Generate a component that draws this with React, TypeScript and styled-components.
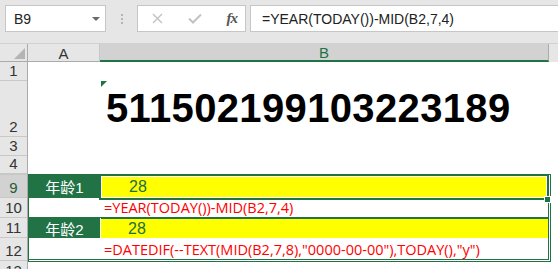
import React from "react";
import styled, { createGlobalStyle } from "styled-components";

const GREEN = "#217346";

const GlobalStyle = createGlobalStyle`
  html, body {
    margin: 0;
    padding: 0;
    background: #fff;
    overflow: hidden;
  }
  body {
    font-family: "Liberation Sans", "Noto Sans CJK SC", sans-serif;
  }
`;

const Window = styled.div`
  width: 558px;
  height: 269px;
  overflow: hidden;
  display: flex;
  flex-direction: column;
  background: #fff;
`;

/* ---------- formula bar ---------- */

const FormulaBar = styled.div`
  height: 43px;
  flex-shrink: 0;
  box-sizing: border-box;
  display: flex;
  align-items: flex-start;
  padding: 5px 0 0 5px;
  background: #e6e6e6;
`;

const Box = styled.div`
  height: 27px;
  box-sizing: border-box;
  background: #fff;
  border: 1px solid #c6c6c6;
  display: flex;
  align-items: center;
`;

const NameBox = styled(Box)`
  width: 101px;
  padding: 0 5px 0 8px;
  justify-content: space-between;
  font-size: 14px;
  color: #222;
`;

const DropArrow = styled.span`
  width: 0;
  height: 0;
  border-left: 4px solid transparent;
  border-right: 4px solid transparent;
  border-top: 4px solid #6a6a6a;
`;

const Dots = styled.div`
  margin: 9px 0 0 15px;
  display: flex;
  flex-direction: column;
  gap: 2px;
  span {
    width: 2px;
    height: 2px;
    background: #b5b5b5;
  }
`;

const FxBox = styled(Box)`
  width: 109px;
  margin-left: 14px;
  padding: 0 8px 0 14px;
  justify-content: space-between;
`;

const FxLabel = styled.span`
  font-family: "Liberation Serif", serif;
  font-style: italic;
  font-weight: bold;
  font-size: 15px;
  color: #555;
  letter-spacing: -1px;
`;

const FormulaInput = styled(Box)`
  flex: 1;
  margin-left: 4px;
  border-right: none;
  padding-left: 11px;
  font-size: 14px;
  color: #222;
`;

/* ---------- column headers ---------- */

const HeaderRow = styled.div`
  height: 19px;
  flex-shrink: 0;
  display: flex;
  box-sizing: border-box;
  border-top: 1px solid #d0d0d0;
  background: #e6e6e6;
`;

const Corner = styled.div`
  width: 28px;
  box-sizing: border-box;
  border-right: 1px solid #ababab;
  border-bottom: 1px solid #ababab;
  position: relative;
  &::after {
    content: "";
    position: absolute;
    right: 2px;
    bottom: 2px;
    width: 11px;
    height: 11px;
    background: #b4b4b4;
    clip-path: polygon(100% 0, 100% 100%, 0 100%);
  }
`;

const ColHead = styled.div<{ $w: number; $selected?: boolean }>`
  width: ${(p) => p.$w}px;
  box-sizing: border-box;
  display: flex;
  align-items: center;
  justify-content: center;
  font-size: 15px;
  padding-top: 1px;
  color: ${(p) => (p.$selected ? GREEN : "#333")};
  background: ${(p) => (p.$selected ? "#d2d2d2" : "#e6e6e6")};
  border-right: 1px solid ${(p) => (p.$selected ? "#ababab" : "#c8c8c8")};
  border-bottom: ${(p) => (p.$selected ? `2px solid ${GREEN}` : "1px solid #ababab")};
`;

const HeaderFill = styled.div`
  flex: 1;
  background: #e6e6e6;
`;

/* ---------- body ---------- */

const Body = styled.div`
  flex: 1;
  min-height: 0;
  display: flex;
`;

const RowHeaders = styled.div`
  width: 28px;
  box-sizing: border-box;
  background: #e6e6e6;
  border-right: 1px solid #ababab;
  display: flex;
  flex-direction: column;
`;

const RowHead = styled.div<{ $h: number; $selected?: boolean; $hiddenAbove?: boolean }>`
  height: ${(p) => p.$h}px;
  flex-shrink: 0;
  box-sizing: border-box;
  display: flex;
  align-items: flex-end;
  justify-content: center;
  padding-bottom: 1px;
  font-size: 15px;
  line-height: 17px;
  color: ${(p) => (p.$selected ? "#1e5c3a" : "#333")};
  background: ${(p) => (p.$selected ? "#d2d2d2" : "#e6e6e6")};
  border-bottom: 1px solid #c8c8c8;
  border-top: ${(p) => (p.$hiddenAbove ? "1px solid #c8c8c8" : "none")};
`;

const Cells = styled.div`
  flex: 1;
  display: flex;
  flex-direction: column;
`;

const Row = styled.div<{ $h: number }>`
  height: ${(p) => p.$h}px;
  flex-shrink: 0;
  display: flex;
`;

const BigCell = styled.div`
  margin-left: 72px;
  width: 449px;
  position: relative;
  display: flex;
  align-items: flex-end;
  padding: 0 0 9px 6px;
  box-sizing: border-box;
  font-weight: bold;
  font-size: 40px;
  letter-spacing: 0.35px;
  line-height: 40px;
  color: #000;
  &::before {
    content: "";
    position: absolute;
    left: 1px;
    top: 0;
    width: 6px;
    height: 6px;
    background: ${GREEN};
    clip-path: polygon(0 0, 100% 0, 0 100%);
  }
`;

const Block = styled.div`
  width: 523px;
  height: 88px;
  flex-shrink: 0;
  box-sizing: border-box;
  border: 1px solid ${GREEN};
  padding: 0 1px 1px 0;
  display: flex;
`;

const BlockInner = styled.div`
  flex: 1;
  border-right: 1px solid ${GREEN};
  border-bottom: 1px solid ${GREEN};
  display: flex;
  flex-direction: column;
`;

const BlockRow = styled.div<{ $h: number; $line?: boolean }>`
  height: ${(p) => p.$h}px;
  flex-shrink: 0;
  box-sizing: border-box;
  display: flex;
  border-bottom: ${(p) => (p.$line ? `1px solid ${GREEN}` : "none")};
`;

const Label = styled.div`
  width: 71px;
  flex-shrink: 0;
  background: ${GREEN};
  color: #fff;
  font-size: 15px;
  display: flex;
  align-items: center;
  justify-content: center;
`;

const Spacer = styled.div`
  width: 71px;
  flex-shrink: 0;
`;

const Value = styled.div<{ $selected?: boolean; $topLine?: boolean }>`
  flex: 1;
  position: relative;
  background: #ffff00;
  color: #1b6e44;
  font-size: 16px;
  display: flex;
  align-items: center;
  padding-left: 27px;
  box-sizing: border-box;
  margin-top: ${(p) => (p.$selected ? "2px" : "0")};
  margin-left: ${(p) => (p.$selected ? "2px" : "1px")};
  margin-right: ${(p) => (p.$selected ? "2px" : "0")};
  margin-bottom: ${(p) => (p.$selected ? "1px" : "0")};
  border-top: ${(p) => (p.$topLine ? `1px solid ${GREEN}` : "none")};
  ${(p) =>
    p.$selected &&
    `
    &::before {
      content: "";
      position: absolute;
      left: -3px;
      top: -3px;
      right: -3px;
      bottom: -3px;
      border: 2px solid ${GREEN};
      pointer-events: none;
    }
    &::after {
      content: "";
      position: absolute;
      right: -5px;
      bottom: -6px;
      width: 5px;
      height: 5px;
      background: ${GREEN};
      border: 1px solid #fff;
    }
  `}
`;

const Formula = styled.div`
  flex: 1;
  color: #ff0000;
  font-family: "Open Sans", "Liberation Sans", sans-serif;
  font-size: 14.5px;
  line-height: 18px;
  padding-left: 4px;
  display: flex;
  align-items: flex-end;
  white-space: nowrap;
`;

const CrossIcon = () => (
  <svg width="11" height="11" viewBox="0 0 11 11">
    <path d="M1 1L10 10M10 1L1 10" stroke="#c2c2c2" strokeWidth="1.4" fill="none" />
  </svg>
);

const CheckIcon = () => (
  <svg width="14" height="11" viewBox="0 0 14 11">
    <path d="M1 5.5L5 9.5L13 1.5" stroke="#c2c2c2" strokeWidth="2" fill="none" />
  </svg>
);

const headRows = [
  { n: "1", h: 19 },
  { n: "2", h: 56 },
  { n: "3", h: 19 },
  { n: "4", h: 18 },
];

export default function App() {
  return (
    <Window>
      <GlobalStyle />
      <FormulaBar>
        <NameBox>
          B9
          <DropArrow />
        </NameBox>
        <Dots>
          <span />
          <span />
          <span />
        </Dots>
        <FxBox>
          <CrossIcon />
          <CheckIcon />
          <FxLabel>fx</FxLabel>
        </FxBox>
        <FormulaInput>=YEAR(TODAY())-MID(B2,7,4)</FormulaInput>
      </FormulaBar>

      <HeaderRow>
        <Corner />
        <ColHead $w={72}>A</ColHead>
        <ColHead $w={449} $selected>
          B
        </ColHead>
        <HeaderFill />
      </HeaderRow>

      <Body>
        <RowHeaders>
          {headRows.map((r) => (
            <RowHead key={r.n} $h={r.h}>
              {r.n}
            </RowHead>
          ))}
          <RowHead $h={24} $selected $hiddenAbove>
            9
          </RowHead>
          <RowHead $h={20}>10</RowHead>
          <RowHead $h={20}>11</RowHead>
          <RowHead $h={23}>12</RowHead>
          <RowHead $h={20}>13</RowHead>
        </RowHeaders>

        <Cells>
          <Row $h={19} />
          <Row $h={56}>
            <BigCell>511502199103223189</BigCell>
          </Row>
          <Row $h={19} />
          <Row $h={18} />
          <Block>
            <BlockInner>
              <BlockRow $h={23}>
                <Label>年龄1</Label>
                <Value $selected>28</Value>
              </BlockRow>
              <BlockRow $h={20} $line>
                <Spacer />
                <Formula>=YEAR(TODAY())-MID(B2,7,4)</Formula>
              </BlockRow>
              <BlockRow $h={20}>
                <Label>年龄2</Label>
                <Value $topLine>28</Value>
              </BlockRow>
              <BlockRow $h={21}>
                <Spacer />
                <Formula>=DATEDIF(--TEXT(MID(B2,7,8),"0000-00-00"),TODAY(),"y")</Formula>
              </BlockRow>
            </BlockInner>
          </Block>
        </Cells>
      </Body>
    </Window>
  );
}
